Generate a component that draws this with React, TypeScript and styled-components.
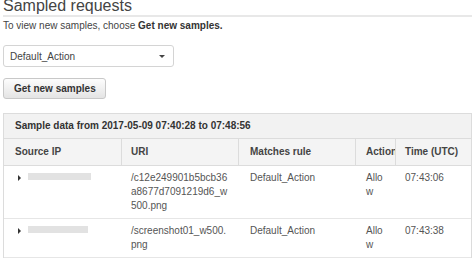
import React from 'react';
import styled, { createGlobalStyle } from 'styled-components';

const GlobalStyle = createGlobalStyle`
  html, body {
    margin: 0;
    padding: 0;
    background: #fff;
    overflow: hidden;
  }
  body {
    font-family: "Liberation Sans", Arial, sans-serif;
    color: #444;
  }
`;

const Page = styled.div`
  padding: 0 2px 0 3px;
  width: 469px;
`;

const Title = styled.h2`
  margin: -2px 0 0 0;
  padding-bottom: 1px;
  font-size: 16px;
  line-height: 16px;
  font-weight: normal;
  color: #444;
  border-bottom: 2px solid #e8e8e8;
`;

const Hint = styled.p`
  margin: 2px 0 0 0;
  font-size: 10px;
  line-height: 14px;
  b {
    color: #333;
  }
`;

const SelectBox = styled.div`
  margin-top: 12px;
  width: 171px;
  height: 22px;
  box-sizing: border-box;
  border: 1px solid #d4d4d4;
  border-radius: 3px;
  display: flex;
  align-items: center;
  justify-content: space-between;
  padding: 0 8px 0 6px;
  font-size: 10px;
  color: #444;
`;

const Caret = styled.span`
  width: 0;
  height: 0;
  border-left: 3px solid transparent;
  border-right: 3px solid transparent;
  border-top: 3px solid #444;
`;

const Button = styled.button`
  margin-top: 11px;
  width: 103px;
  height: 21px;
  box-sizing: border-box;
  border: 1px solid #c8c8c8;
  border-radius: 3px;
  background: linear-gradient(#fdfdfd, #e4e4e4);
  font-family: inherit;
  font-size: 10px;
  font-weight: bold;
  color: #333;
  text-align: left;
  padding: 0 0 0 10px;
`;

const Panel = styled.div`
  margin-top: 14px;
  width: 469px;
  box-sizing: border-box;
  border: 1px solid #dcdcdc;
  border-bottom: none;
`;

const PanelHeader = styled.div`
  background: #f2f2f2;
  border-bottom: 1px solid #dcdcdc;
  height: 24px;
  line-height: 24px;
  padding-left: 11px;
  font-size: 10px;
  font-weight: bold;
  color: #333;
`;

const Row = styled.div<{ $head?: boolean }>`
  display: grid;
  grid-template-columns: 117px 117px 117px 40px 1fr;
  background: ${p => (p.$head ? '#f4f4f4' : '#fff')};
  border-bottom: 1px solid ${p => (p.$head ? '#dcdcdc' : '#e6e6e6')};
`;

const HeadCell = styled.div<{ $pad?: number }>`
  height: 26px;
  line-height: 26px;
  padding-left: ${p => p.$pad ?? 11}px;
  font-size: 10px;
  font-weight: bold;
  color: #444;
  white-space: nowrap;
  overflow: hidden;
  & + & {
    border-left: 1px solid #dcdcdc;
  }
`;

const Cell = styled.div<{ $pad?: number }>`
  padding: 5px 9px 5px ${p => p.$pad ?? 11}px;
  font-size: 10px;
  line-height: 14px;
  color: #555;
  word-break: break-all;
`;

const SourceCell = styled(Cell)`
  display: flex;
  align-items: flex-start;
  padding-left: 14px;
`;

const Arrow = styled.span`
  margin-top: 4px;
  width: 0;
  height: 0;
  border-top: 3px solid transparent;
  border-bottom: 3px solid transparent;
  border-left: 3px solid #333;
`;

const Redacted = styled.span<{ $w: number }>`
  margin: 2px 0 0 7px;
  width: ${p => p.$w}px;
  height: 7px;
  background: #e2e2e2;
`;

const rows = [
  { ip: 63, uri: '/c12e249901b5bcb36a8677d7091219d6_w500.png', rule: 'Default_Action', action: 'Allow', time: '07:43:06' },
  { ip: 60, uri: '/screenshot01_w500.png', rule: 'Default_Action', action: 'Allow', time: '07:43:38' },
];

const App: React.FC = () => (
  <Page>
    <GlobalStyle />
    <Title>Sampled requests</Title>
    <Hint>
      To view new samples, choose <b>Get new samples.</b>
    </Hint>
    <SelectBox>
      <span>Default_Action</span>
      <Caret />
    </SelectBox>
    <Button>Get new samples</Button>
    <Panel>
      <PanelHeader>Sample data from 2017-05-09 07:40:28 to 07:48:56</PanelHeader>
      <Row $head>
        <HeadCell>Source IP</HeadCell>
        <HeadCell $pad={9}>URI</HeadCell>
        <HeadCell>Matches rule</HeadCell>
        <HeadCell $pad={10}>Action</HeadCell>
        <HeadCell $pad={9}>Time (UTC)</HeadCell>
      </Row>
      {rows.map((r, i) => (
        <Row key={i}>
          <SourceCell>
            <Arrow />
            <Redacted $w={r.ip} />
          </SourceCell>
          <Cell $pad={10}>{r.uri}</Cell>
          <Cell $pad={12}>{r.rule}</Cell>
          <Cell $pad={11}>{r.action}</Cell>
          <Cell $pad={10}>{r.time}</Cell>
        </Row>
      ))}
    </Panel>
  </Page>
);

export default App;
